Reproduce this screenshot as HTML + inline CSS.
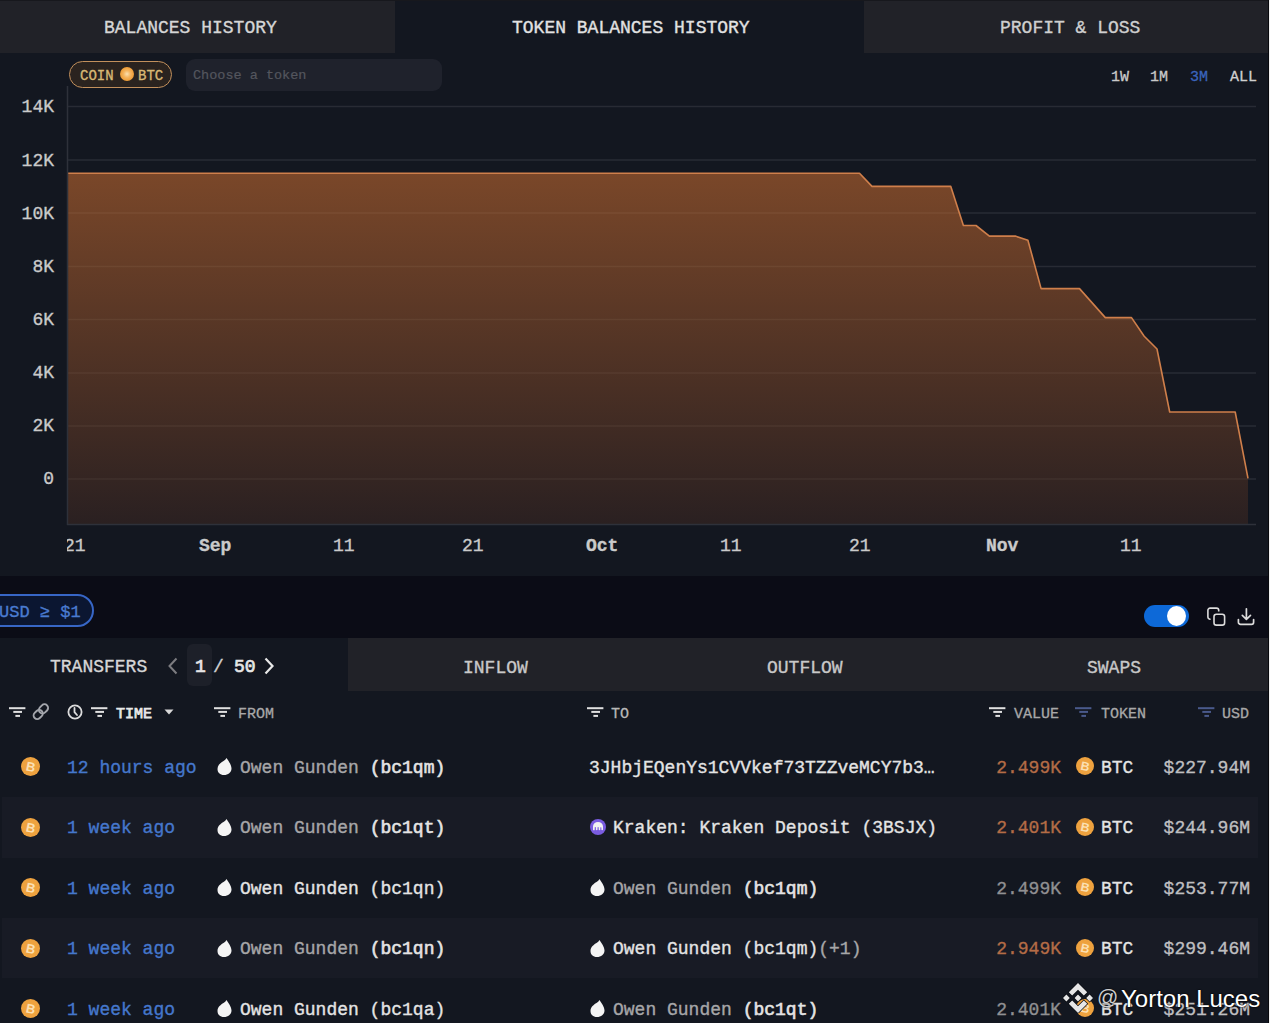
<!DOCTYPE html>
<html><head><meta charset="utf-8">
<style>
*{margin:0;padding:0;box-sizing:border-box}
html,body{width:1270px;height:1023px;overflow:hidden;background:#131720;font-family:"Liberation Mono",monospace;}
.a{position:absolute;white-space:pre;line-height:1}
.t18{font-size:18px;-webkit-text-stroke:0.35px currentColor}
.t16{font-size:16px;-webkit-text-stroke:0.3px currentColor}
.t15{font-size:15px;-webkit-text-stroke:0.3px currentColor}
.t14{font-size:14px}
.b{font-weight:bold}
</style></head><body>
<!-- top tabs -->
<div class="a" style="left:0;top:0;width:1268px;height:1px;background:#17181d;z-index:1"></div>
<div class="a" style="left:0;top:0;width:395px;height:53px;background:#212228"></div>
<div class="a" style="left:864px;top:0;width:404px;height:53px;background:#212228"></div>
<div class="a t18" style="left:104px;top:19px;color:#d6d6d6">BALANCES HISTORY</div>
<div class="a t18" style="left:512px;top:19px;color:#e2e2e2">TOKEN BALANCES HISTORY</div>
<div class="a t18" style="left:1000px;top:19px;color:#cfcfcf">PROFIT &amp; LOSS</div>

<!-- coin pill -->
<div class="a" style="left:69px;top:61px;width:103px;height:27px;border:1.8px solid #c2905c;border-radius:14px;background:#2a231f"></div>
<div class="a t14" style="left:80px;top:69px;color:#d8b874;-webkit-text-stroke:0.35px currentColor">COIN</div>
<div class="a" style="left:120px;top:67px;width:14px;height:14px;border-radius:50%;background:radial-gradient(circle,#fbe0b0 0,#f5b560 35%,#ee9c35 70%)"></div>
<div class="a t14" style="left:138px;top:69px;color:#d8b874;-webkit-text-stroke:0.35px currentColor">BTC</div>
<!-- token input -->
<div class="a" style="left:186px;top:59px;width:256px;height:32px;border-radius:9px;background:#1f222c"></div>
<div class="a" style="left:193px;top:69px;font-size:13.5px;color:#54565e;-webkit-text-stroke:0.2px currentColor">Choose a token</div>
<!-- ranges -->
<div class="a t15" style="left:1111px;top:70px;color:#c9c9c9">1W</div>
<div class="a t15" style="left:1150px;top:70px;color:#c9c9c9">1M</div>
<div class="a t15" style="left:1190px;top:70px;color:#3a64bc">3M</div>
<div class="a t15" style="left:1230px;top:70px;color:#d0d0d0">ALL</div>

<!-- chart -->
<svg class="a" style="left:0;top:0" width="1270" height="580" viewBox="0 0 1270 580">
<defs>
<linearGradient id="g" x1="0" y1="173" x2="0" y2="525" gradientUnits="userSpaceOnUse">
<stop offset="0" stop-color="#7a4729"/>
<stop offset="1" stop-color="#2a2021"/>
</linearGradient>
</defs>
<g stroke="rgba(230,230,240,0.10)" stroke-width="1.5">
<line x1="67" y1="106.5" x2="1256" y2="106.5"/>
<line x1="67" y1="160" x2="1256" y2="160"/>
<line x1="67" y1="213" x2="1256" y2="213"/>
<line x1="67" y1="266.5" x2="1256" y2="266.5"/>
<line x1="67" y1="319.5" x2="1256" y2="319.5"/>
<line x1="67" y1="373" x2="1256" y2="373"/>
<line x1="67" y1="426" x2="1256" y2="426"/>
<line x1="67" y1="479" x2="1256" y2="479"/>
</g>
<polygon fill="url(#g)" points="67,525 67,173.2 859.5,173.2 872,186.4 950.8,186.4 963.4,225.5 976,225.5 989.4,236.1 1015.3,236.1 1027.9,240.2 1041.1,288.6 1079.5,288.6 1105.3,317.6 1131.5,317.6 1144.2,336.2 1157,349 1169.7,412 1235.2,412 1248,478.4 1248,525"/>
<clipPath id="ac"><polygon points="67,525 67,173.2 859.5,173.2 872,186.4 950.8,186.4 963.4,225.5 976,225.5 989.4,236.1 1015.3,236.1 1027.9,240.2 1041.1,288.6 1079.5,288.6 1105.3,317.6 1131.5,317.6 1144.2,336.2 1157,349 1169.7,412 1235.2,412 1248,478.4 1248,525"/></clipPath>
<g stroke="rgba(255,230,210,0.06)" stroke-width="1.5" clip-path="url(#ac)">
<line x1="67" y1="106.5" x2="1256" y2="106.5"/>
<line x1="67" y1="160" x2="1256" y2="160"/>
<line x1="67" y1="213" x2="1256" y2="213"/>
<line x1="67" y1="266.5" x2="1256" y2="266.5"/>
<line x1="67" y1="319.5" x2="1256" y2="319.5"/>
<line x1="67" y1="373" x2="1256" y2="373"/>
<line x1="67" y1="426" x2="1256" y2="426"/>
<line x1="67" y1="479" x2="1256" y2="479"/>
</g>
<polyline fill="none" stroke="#cf7f4b" stroke-width="1.6" stroke-linejoin="round" points="67,173.2 859.5,173.2 872,186.4 950.8,186.4 963.4,225.5 976,225.5 989.4,236.1 1015.3,236.1 1027.9,240.2 1041.1,288.6 1079.5,288.6 1105.3,317.6 1131.5,317.6 1144.2,336.2 1157,349 1169.7,412 1235.2,412 1248,478.4"/>
<line x1="67.5" y1="86" x2="67.5" y2="525" stroke="#2e313a" stroke-width="1.5"/>
<line x1="67" y1="524.5" x2="1256" y2="524.5" stroke="#2e313a" stroke-width="1.5"/>
</svg>
<!-- y labels -->
<div class="a t18" style="right:1216px;top:98px;color:#cacaca">14K</div>
<div class="a t18" style="right:1216px;top:152px;color:#cacaca">12K</div>
<div class="a t18" style="right:1216px;top:205px;color:#cacaca">10K</div>
<div class="a t18" style="right:1216px;top:258px;color:#cacaca">8K</div>
<div class="a t18" style="right:1216px;top:311px;color:#cacaca">6K</div>
<div class="a t18" style="right:1216px;top:364px;color:#cacaca">4K</div>
<div class="a t18" style="right:1216px;top:417px;color:#cacaca">2K</div>
<div class="a t18" style="right:1216px;top:470px;color:#cacaca">0</div>
<!-- x labels -->
<div class="a" style="left:67px;top:530px;width:40px;height:30px;overflow:hidden"><div class="a t18" style="left:-3px;top:7px;color:#cacaca">21</div></div>
<div class="a t18 b" style="left:199px;top:537px;color:#cacaca">Sep</div>
<div class="a t18" style="left:333px;top:537px;color:#cacaca">11</div>
<div class="a t18" style="left:462px;top:537px;color:#cacaca">21</div>
<div class="a t18 b" style="left:586px;top:537px;color:#cacaca">Oct</div>
<div class="a t18" style="left:720px;top:537px;color:#cacaca">11</div>
<div class="a t18" style="left:849px;top:537px;color:#cacaca">21</div>
<div class="a t18 b" style="left:986px;top:537px;color:#cacaca">Nov</div>
<div class="a t18" style="left:1120px;top:537px;color:#cacaca">11</div>

<!-- dark band -->
<div class="a" style="left:0;top:576px;width:1270px;height:62px;background:#0b0c16"></div>
<div class="a" style="left:-20px;top:594px;width:114px;height:33px;border:2px solid #3766c6;border-radius:17px;background:#0b1631"></div>
<div class="a" style="left:-1px;top:604px;font-size:17px;-webkit-text-stroke:0.35px currentColor;color:#4a7bd0">USD ≥ $1</div>
<!-- toggle -->
<div class="a" style="left:1144px;top:605px;width:45px;height:22px;border-radius:11px;background:#0d69d8"></div>
<div class="a" style="left:1167px;top:606px;width:19px;height:20px;border-radius:50%;background:#fff"></div>

<!-- table tabs -->
<div class="a" style="left:348px;top:638px;width:920px;height:53px;background:#212228"></div>
<div class="a t18" style="left:50px;top:658px;color:#d6d6d6">TRANSFERS</div>
<div class="a t18" style="left:463px;top:659px;color:#c8c8c8" >INFLOW</div>
<div class="a t18" style="left:767px;top:659px;color:#c8c8c8">OUTFLOW</div>
<div class="a t18" style="left:1087px;top:659px;color:#c8c8c8">SWAPS</div>


<div class="a" style="left:2px;top:797px;width:1256px;height:61px;background:#181b25"></div>
<div class="a" style="left:2px;top:918px;width:1256px;height:60px;background:#181b25"></div>
<div class="a" style="left:187px;top:644px;width:25px;height:42px;border-radius:6px;background:#1d2029"></div>
<svg class="a" style="left:166px;top:657px" width="14" height="18" viewBox="0 0 14 18"><path d="M10.5 1.5 L3.5 9 L10.5 16.5" fill="none" stroke="#7c7c80" stroke-width="2"/></svg>
<div class="a t18" style="left:195px;top:658px;color:#e6e6e6;-webkit-text-stroke:0.7px currentColor">1</div>
<div class="a t18" style="left:213px;top:658px;color:#d0d0d0">/</div>
<div class="a t18" style="left:234px;top:658px;color:#e6e6e6;-webkit-text-stroke:0.7px currentColor">50</div>
<svg class="a" style="left:262px;top:657px" width="14" height="18" viewBox="0 0 14 18"><path d="M3.5 1.5 L10.5 9 L3.5 16.5" fill="none" stroke="#e8e8e8" stroke-width="2.2"/></svg>
<svg class="a" style="left:8px;top:706px" width="18" height="12" viewBox="0 0 18 12"><g stroke="#e0e0e0" stroke-width="2"><line x1="1" y1="2.2" x2="17.4" y2="2.2"/><line x1="5.3" y1="5.9" x2="14" y2="5.9"/><line x1="7.4" y1="9.9" x2="12" y2="9.9"/></g></svg>
<svg class="a" style="left:28px;top:698px" width="28" height="26" viewBox="0 0 28 26"><g fill="none" stroke="#a4a6ac" stroke-width="1.9"><rect x="10.5" y="7.3" width="10" height="7.2" rx="3.6" transform="rotate(-45 15.5 10.9)"/><rect x="5.2" y="12.9" width="10" height="7.2" rx="3.6" transform="rotate(-45 10.2 16.5)"/></g></svg>
<svg class="a" style="left:67px;top:704px" width="16" height="16" viewBox="0 0 16 16"><g fill="none" stroke="#dcdcdc" stroke-width="1.8"><circle cx="8" cy="8" r="6.6"/><path d="M7.5 4 V8.2 L10 11" stroke-linecap="round"/></g></svg>
<svg class="a" style="left:90px;top:706px" width="18" height="12" viewBox="0 0 18 12"><g stroke="#e0e0e0" stroke-width="2"><line x1="1" y1="2.2" x2="17.4" y2="2.2"/><line x1="5.3" y1="5.9" x2="14" y2="5.9"/><line x1="7.4" y1="9.9" x2="12" y2="9.9"/></g></svg>
<div class="a t15" style="left:116px;top:707px;color:#e8e8e8;-webkit-text-stroke:0.75px currentColor">TIME</div>
<svg class="a" style="left:164px;top:709px" width="10" height="6" viewBox="0 0 10 6"><path d="M0.5 0.5 H9.5 L5 5.5Z" fill="#d8d8d8"/></svg>
<svg class="a" style="left:213px;top:706px" width="18" height="12" viewBox="0 0 18 12"><g stroke="#e0e0e0" stroke-width="2"><line x1="1" y1="2.2" x2="17.4" y2="2.2"/><line x1="5.3" y1="5.9" x2="14" y2="5.9"/><line x1="7.4" y1="9.9" x2="12" y2="9.9"/></g></svg>
<div class="a t15" style="left:238px;top:707px;color:#a8a8a8">FROM</div>
<svg class="a" style="left:586px;top:706px" width="18" height="12" viewBox="0 0 18 12"><g stroke="#e0e0e0" stroke-width="2"><line x1="1" y1="2.2" x2="17.4" y2="2.2"/><line x1="5.3" y1="5.9" x2="14" y2="5.9"/><line x1="7.4" y1="9.9" x2="12" y2="9.9"/></g></svg>
<div class="a t15" style="left:611px;top:707px;color:#b8b8b8">TO</div>
<svg class="a" style="left:988px;top:706px" width="18" height="12" viewBox="0 0 18 12"><g stroke="#e0e0e0" stroke-width="2"><line x1="1" y1="2.2" x2="17.4" y2="2.2"/><line x1="5.3" y1="5.9" x2="14" y2="5.9"/><line x1="7.4" y1="9.9" x2="12" y2="9.9"/></g></svg>
<div class="a t15" style="left:1014px;top:707px;color:#a8a8a8">VALUE</div>
<svg class="a" style="left:1074px;top:706px" width="18" height="12" viewBox="0 0 18 12"><g stroke="#4a5a8c" stroke-width="2"><line x1="1" y1="2.2" x2="17.4" y2="2.2"/><line x1="5.3" y1="5.9" x2="14" y2="5.9"/><line x1="7.4" y1="9.9" x2="12" y2="9.9"/></g></svg>
<div class="a t15" style="left:1101px;top:707px;color:#a8a8a8">TOKEN</div>
<svg class="a" style="left:1197px;top:706px" width="18" height="12" viewBox="0 0 18 12"><g stroke="#4a5a8c" stroke-width="2"><line x1="1" y1="2.2" x2="17.4" y2="2.2"/><line x1="5.3" y1="5.9" x2="14" y2="5.9"/><line x1="7.4" y1="9.9" x2="12" y2="9.9"/></g></svg>
<div class="a t15" style="left:1222px;top:707px;color:#a8a8a8">USD</div>
<svg class="a" style="left:20.0px;top:755.5px" width="21" height="21" viewBox="0 0 21 21"><circle cx="10.5" cy="10.5" r="9.5" fill="#eea23f"/><text x="10.8" y="15.25" font-family="Liberation Sans" font-weight="bold" font-size="12.920000000000002" fill="#fbe0b4" text-anchor="middle" transform="rotate(12 10.5 10.5)">B</text></svg>
<div class="a t18" style="left:67px;top:759px;color:#4577cc;">12 hours ago</div>
<svg class="a" style="left:216px;top:756.5px" width="17" height="19" viewBox="0 0 17 19"><path d="M10.5 1 C12.5 4 15.5 8 15.5 11.5 C15.5 15.5 12 18 8 18 C4 18 1.5 15.5 1.5 12 C1.5 8 5 5.5 7.5 4 C8.8 3.2 9.8 2.2 10.5 1 Z" fill="#f4f4f4"/></svg>
<div class="a t18" style="left:240px;top:759px"><span style="color:#a6a6a8;">Owen Gunden </span><span style="color:#e4e4e4;-webkit-text-stroke:0.6px currentColor">(bc1qm)</span></div>
<div class="a t18" style="left:589px;top:759px"><span style="color:#e4e4e4;">3JHbjEQenYs1CVVkef73TZZveMCY7b3…</span></div>
<div class="a t18" style="right:209px;top:759px;color:#b46c46;">2.499K</div>
<svg class="a" style="left:1075.3px;top:756.0px" width="20" height="20" viewBox="0 0 20 20"><circle cx="10.0" cy="10.0" r="9.0" fill="#eea23f"/><text x="10.3" y="14.5" font-family="Liberation Sans" font-weight="bold" font-size="12.24" fill="#fbe0b4" text-anchor="middle" transform="rotate(12 10.0 10.0)">B</text></svg>
<div class="a t18" style="left:1101px;top:759px;color:#e4e4e4;">BTC</div>
<div class="a t18" style="right:20px;top:759px;color:#bfbfc0;">$227.94M</div>
<svg class="a" style="left:20.0px;top:816.5px" width="21" height="21" viewBox="0 0 21 21"><circle cx="10.5" cy="10.5" r="9.5" fill="#eea23f"/><text x="10.8" y="15.25" font-family="Liberation Sans" font-weight="bold" font-size="12.920000000000002" fill="#fbe0b4" text-anchor="middle" transform="rotate(12 10.5 10.5)">B</text></svg>
<div class="a t18" style="left:67px;top:819px;color:#4577cc;">1 week ago</div>
<svg class="a" style="left:216px;top:817.5px" width="17" height="19" viewBox="0 0 17 19"><path d="M10.5 1 C12.5 4 15.5 8 15.5 11.5 C15.5 15.5 12 18 8 18 C4 18 1.5 15.5 1.5 12 C1.5 8 5 5.5 7.5 4 C8.8 3.2 9.8 2.2 10.5 1 Z" fill="#f4f4f4"/></svg>
<div class="a t18" style="left:240px;top:819px"><span style="color:#a6a6a8;">Owen Gunden </span><span style="color:#e4e4e4;-webkit-text-stroke:0.6px currentColor">(bc1qt)</span></div>
<svg class="a" style="left:588.5px;top:818px" width="18" height="18" viewBox="0 0 18 18"><circle cx="9" cy="9" r="8" fill="#7a5ce0"/><path d="M4 11.5 V8.5 A5 4.5 0 0 1 14 8.5 V11.5 A0.8 0.8 0 0 1 12.4 11.5 V9.5 A0.6 0.6 0 0 0 11.3 9.5 V11.5 A0.8 0.8 0 0 1 9.7 11.5 V9.5 A0.6 0.6 0 0 0 8.5 9.5 V11.5 A0.8 0.8 0 0 1 6.9 11.5 V9.5 A0.6 0.6 0 0 0 5.7 9.5 V11.5 A0.8 0.8 0 0 1 4 11.5Z" fill="#f2f2f2"/></svg>
<div class="a t18" style="left:613px;top:819px"><span style="color:#e4e4e4;">Kraken: Kraken Deposit (3BSJX)</span></div>
<div class="a t18" style="right:209px;top:819px;color:#b46c46;">2.401K</div>
<svg class="a" style="left:1075.3px;top:817.0px" width="20" height="20" viewBox="0 0 20 20"><circle cx="10.0" cy="10.0" r="9.0" fill="#eea23f"/><text x="10.3" y="14.5" font-family="Liberation Sans" font-weight="bold" font-size="12.24" fill="#fbe0b4" text-anchor="middle" transform="rotate(12 10.0 10.0)">B</text></svg>
<div class="a t18" style="left:1101px;top:819px;color:#e4e4e4;">BTC</div>
<div class="a t18" style="right:20px;top:819px;color:#bfbfc0;">$244.96M</div>
<svg class="a" style="left:20.0px;top:876.5px" width="21" height="21" viewBox="0 0 21 21"><circle cx="10.5" cy="10.5" r="9.5" fill="#eea23f"/><text x="10.8" y="15.25" font-family="Liberation Sans" font-weight="bold" font-size="12.920000000000002" fill="#fbe0b4" text-anchor="middle" transform="rotate(12 10.5 10.5)">B</text></svg>
<div class="a t18" style="left:67px;top:880px;color:#4577cc;">1 week ago</div>
<svg class="a" style="left:216px;top:877.5px" width="17" height="19" viewBox="0 0 17 19"><path d="M10.5 1 C12.5 4 15.5 8 15.5 11.5 C15.5 15.5 12 18 8 18 C4 18 1.5 15.5 1.5 12 C1.5 8 5 5.5 7.5 4 C8.8 3.2 9.8 2.2 10.5 1 Z" fill="#f4f4f4"/></svg>
<div class="a t18" style="left:240px;top:880px"><span style="color:#e4e4e4;">Owen Gunden (bc1qn)</span></div>
<svg class="a" style="left:589px;top:877.5px" width="17" height="19" viewBox="0 0 17 19"><path d="M10.5 1 C12.5 4 15.5 8 15.5 11.5 C15.5 15.5 12 18 8 18 C4 18 1.5 15.5 1.5 12 C1.5 8 5 5.5 7.5 4 C8.8 3.2 9.8 2.2 10.5 1 Z" fill="#f4f4f4"/></svg>
<div class="a t18" style="left:613px;top:880px"><span style="color:#a6a6a8;">Owen Gunden </span><span style="color:#e4e4e4;-webkit-text-stroke:0.6px currentColor">(bc1qm)</span></div>
<div class="a t18" style="right:209px;top:880px;color:#909092;">2.499K</div>
<svg class="a" style="left:1075.3px;top:877.0px" width="20" height="20" viewBox="0 0 20 20"><circle cx="10.0" cy="10.0" r="9.0" fill="#eea23f"/><text x="10.3" y="14.5" font-family="Liberation Sans" font-weight="bold" font-size="12.24" fill="#fbe0b4" text-anchor="middle" transform="rotate(12 10.0 10.0)">B</text></svg>
<div class="a t18" style="left:1101px;top:880px;color:#e4e4e4;">BTC</div>
<div class="a t18" style="right:20px;top:880px;color:#bfbfc0;">$253.77M</div>
<svg class="a" style="left:20.0px;top:937.5px" width="21" height="21" viewBox="0 0 21 21"><circle cx="10.5" cy="10.5" r="9.5" fill="#eea23f"/><text x="10.8" y="15.25" font-family="Liberation Sans" font-weight="bold" font-size="12.920000000000002" fill="#fbe0b4" text-anchor="middle" transform="rotate(12 10.5 10.5)">B</text></svg>
<div class="a t18" style="left:67px;top:940px;color:#4577cc;">1 week ago</div>
<svg class="a" style="left:216px;top:938.5px" width="17" height="19" viewBox="0 0 17 19"><path d="M10.5 1 C12.5 4 15.5 8 15.5 11.5 C15.5 15.5 12 18 8 18 C4 18 1.5 15.5 1.5 12 C1.5 8 5 5.5 7.5 4 C8.8 3.2 9.8 2.2 10.5 1 Z" fill="#f4f4f4"/></svg>
<div class="a t18" style="left:240px;top:940px"><span style="color:#a6a6a8;">Owen Gunden </span><span style="color:#e4e4e4;-webkit-text-stroke:0.6px currentColor">(bc1qn)</span></div>
<svg class="a" style="left:589px;top:938.5px" width="17" height="19" viewBox="0 0 17 19"><path d="M10.5 1 C12.5 4 15.5 8 15.5 11.5 C15.5 15.5 12 18 8 18 C4 18 1.5 15.5 1.5 12 C1.5 8 5 5.5 7.5 4 C8.8 3.2 9.8 2.2 10.5 1 Z" fill="#f4f4f4"/></svg>
<div class="a t18" style="left:613px;top:940px"><span style="color:#e4e4e4;">Owen Gunden (bc1qm)</span><span style="color:#a6a6a8;">(+1)</span></div>
<div class="a t18" style="right:209px;top:940px;color:#b46c46;">2.949K</div>
<svg class="a" style="left:1075.3px;top:938.0px" width="20" height="20" viewBox="0 0 20 20"><circle cx="10.0" cy="10.0" r="9.0" fill="#eea23f"/><text x="10.3" y="14.5" font-family="Liberation Sans" font-weight="bold" font-size="12.24" fill="#fbe0b4" text-anchor="middle" transform="rotate(12 10.0 10.0)">B</text></svg>
<div class="a t18" style="left:1101px;top:940px;color:#e4e4e4;">BTC</div>
<div class="a t18" style="right:20px;top:940px;color:#bfbfc0;">$299.46M</div>
<svg class="a" style="left:20.0px;top:997.5px" width="21" height="21" viewBox="0 0 21 21"><circle cx="10.5" cy="10.5" r="9.5" fill="#eea23f"/><text x="10.8" y="15.25" font-family="Liberation Sans" font-weight="bold" font-size="12.920000000000002" fill="#fbe0b4" text-anchor="middle" transform="rotate(12 10.5 10.5)">B</text></svg>
<div class="a t18" style="left:67px;top:1001px;color:#4577cc;">1 week ago</div>
<svg class="a" style="left:216px;top:998.5px" width="17" height="19" viewBox="0 0 17 19"><path d="M10.5 1 C12.5 4 15.5 8 15.5 11.5 C15.5 15.5 12 18 8 18 C4 18 1.5 15.5 1.5 12 C1.5 8 5 5.5 7.5 4 C8.8 3.2 9.8 2.2 10.5 1 Z" fill="#f4f4f4"/></svg>
<div class="a t18" style="left:240px;top:1001px"><span style="color:#e4e4e4;">Owen Gunden (bc1qa)</span></div>
<svg class="a" style="left:589px;top:998.5px" width="17" height="19" viewBox="0 0 17 19"><path d="M10.5 1 C12.5 4 15.5 8 15.5 11.5 C15.5 15.5 12 18 8 18 C4 18 1.5 15.5 1.5 12 C1.5 8 5 5.5 7.5 4 C8.8 3.2 9.8 2.2 10.5 1 Z" fill="#f4f4f4"/></svg>
<div class="a t18" style="left:613px;top:1001px"><span style="color:#a6a6a8;">Owen Gunden </span><span style="color:#e4e4e4;-webkit-text-stroke:0.6px currentColor">(bc1qt)</span></div>
<div class="a t18" style="right:209px;top:1001px;color:#909092;">2.401K</div>
<svg class="a" style="left:1075.3px;top:998.0px" width="20" height="20" viewBox="0 0 20 20"><circle cx="10.0" cy="10.0" r="9.0" fill="#eea23f"/><text x="10.3" y="14.5" font-family="Liberation Sans" font-weight="bold" font-size="12.24" fill="#fbe0b4" text-anchor="middle" transform="rotate(12 10.0 10.0)">B</text></svg>
<div class="a t18" style="left:1101px;top:1001px;color:#e4e4e4;">BTC</div>
<div class="a t18" style="right:20px;top:1001px;color:#bfbfc0;">$251.26M</div>
<svg class="a" style="left:1063px;top:983px" width="30" height="30" viewBox="0 0 126.61 126.61"><path fill="#e6e6e6" stroke="#0b0d12" stroke-width="6" paint-order="stroke" d="M38.73 53.2l24.59-24.58 24.6 24.6 14.3-14.31L63.32 0 24.42 38.9l14.31 14.3zM0 63.31l14.3-14.31 14.31 14.31-14.31 14.3zm38.73 10.11l24.59 24.59 24.6-24.6 14.31 14.29-38.9 38.91-38.91-38.88-.02-.02zm59.28-10.11l14.3-14.31 14.31 14.3-14.31 14.31zm-20.18-.01L63.32 48.8 52.6 59.5l-1.23 1.23-2.54 2.54.02.02 14.47 14.46 14.51-14.52.01-.01z"/></svg>
<div class="a" style="left:1097px;top:986px;font-family:'Liberation Sans',sans-serif;font-size:21px;color:#cfcfcf;text-shadow:0 0 2px #000">@</div>
<div class="a" style="left:1121px;top:987px;font-family:'Liberation Sans',sans-serif;font-size:24px;color:#ffffff;text-shadow:0 0 2px #000,0 0 1px #000">Yorton Luces</div>
<svg class="a" style="left:1205px;top:606px" width="22" height="22" viewBox="0 0 22 22"><g fill="none" stroke="#dcdcdc" stroke-width="1.6"><path d="M5.6 13.2 H5.1 A2.2 2.2 0 0 1 2.9 11 V4.3 A2.2 2.2 0 0 1 5.1 2.1 H11.5 A2.2 2.2 0 0 1 13.7 4.3 V5.6"/><rect x="9" y="8.2" width="10.6" height="10.9" rx="2.4"/></g></svg>
<svg class="a" style="left:1236px;top:606px" width="20" height="21" viewBox="0 0 20 21"><g fill="none" stroke="#dcdcdc" stroke-width="1.7" stroke-linecap="round" stroke-linejoin="round"><path d="M10.4 2.8 V13 M6.3 9.4 L10.4 13.3 L14.5 9.4"/><path d="M2.4 13.6 V16.2 A2.1 2.1 0 0 0 4.5 18.3 H15.5 A2.1 2.1 0 0 0 17.6 16.2 V13.6"/></g></svg>
<div class="a" style="left:1268px;top:0;width:1px;height:1023px;background:#08090d"></div>
<div class="a" style="left:1269px;top:0;width:1px;height:1023px;background:#f0f0f0"></div>
</body></html>
